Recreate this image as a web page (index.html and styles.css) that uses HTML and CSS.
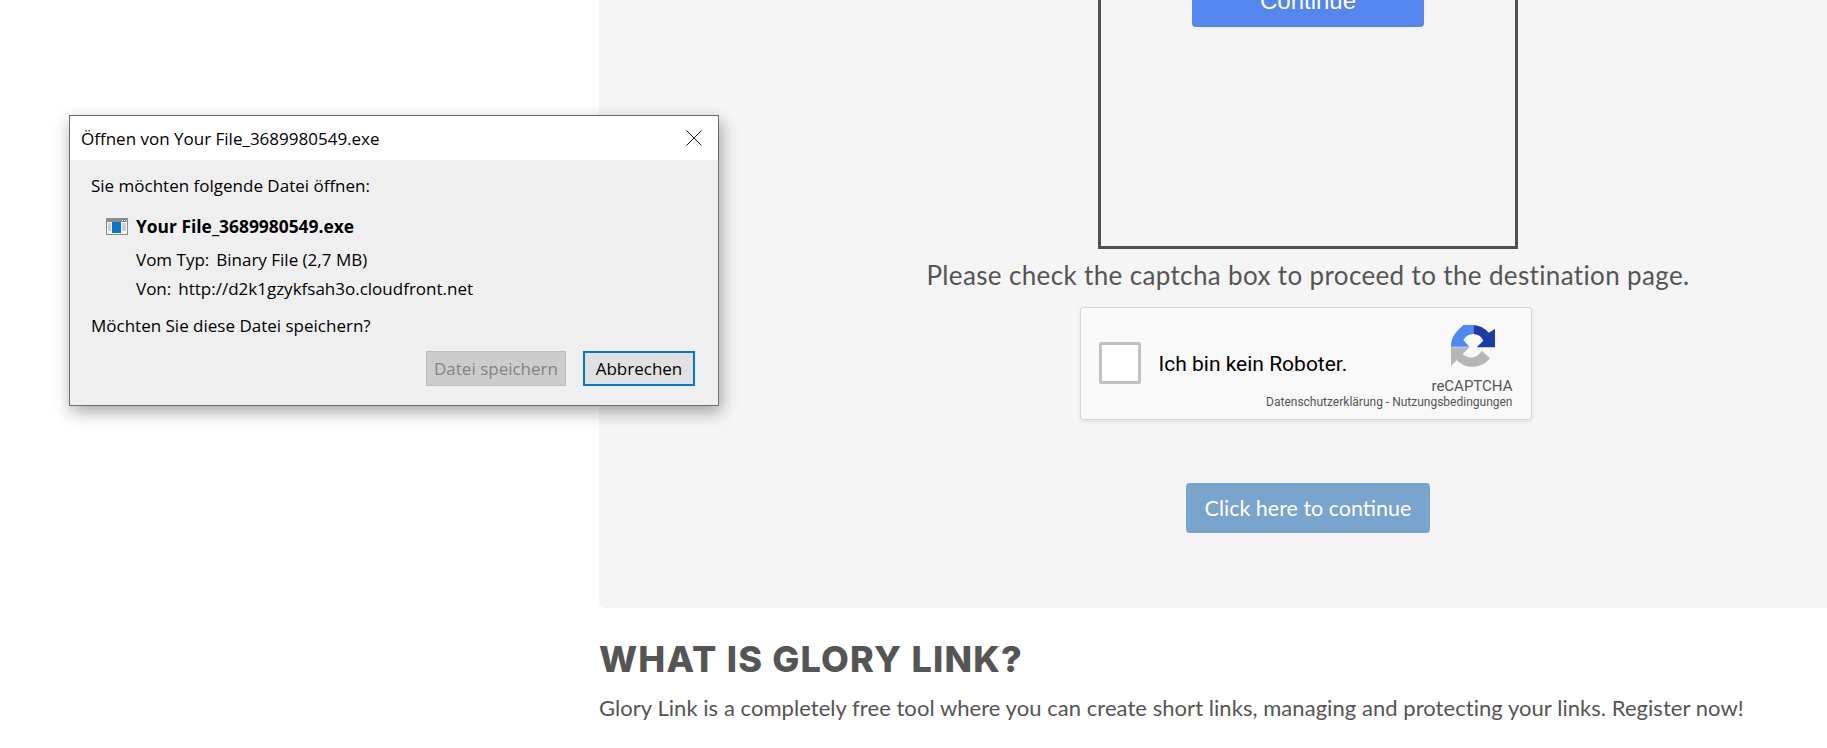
FILE: index.html
```html
<!DOCTYPE html>
<html lang="de">
<head>
<meta charset="utf-8">
<title>Glory Link</title>
<link rel="stylesheet" href="styles.css">
</head>
<body>
<main class="page">
  <section class="panel">
    <div class="frame">
      <a class="continue">Continue</a>
    </div>
    <p class="hint">Please check the captcha box to proceed to the destination page.</p>
    <div class="captcha">
      <span class="check"></span>
      <span class="robot">Ich bin kein Roboter.</span>
      <div class="brand">
        <svg class="logo" viewBox="93 45 132 135" width="44" height="45" aria-hidden="true">
          <path fill="#1c3aa9" d="M160 45A67 67 0 0 1 206 68L225 57V112H170L190 92A35 35 0 0 0 160 72Z"/>
          <path fill="#4a8af4" d="M93 110V105A67 67 0 0 1 114 61L130 45H160V72A35 35 0 0 0 130 90L148 110Z"/>
          <path fill="#b6b6b6" d="M93 112H148L128 132A35 35 0 0 0 185 122L210 145A67 67 0 0 1 110 151L93 168Z"/>
        </svg>
        <span class="brand-name">reCAPTCHA</span>
        <span class="brand-links">Datenschutzerklärung - Nutzungsbedingungen</span>
      </div>
    </div>
    <a class="proceed">Click here to continue</a>
  </section>
  <section class="about">
    <h2>WHAT IS GLORY LINK?</h2>
    <p>Glory Link is a completely free tool where you can create short links, managing and protecting your links. Register now!</p>
  </section>
</main>

<div class="dialog" role="dialog">
  <header class="dlg-title">
    <span>Öffnen von Your File_3689980549.exe</span>
    <svg class="dlg-close" viewBox="0 0 16 16" width="16" height="16" aria-hidden="true"><path d="M0.5 0.5L15.5 15.5M15.5 0.5L0.5 15.5" stroke="#1a1a1a" stroke-width="1" fill="none"/></svg>
  </header>
  <div class="dlg-body">
    <p class="dlg-lead">Sie möchten folgende Datei öffnen:</p>
    <div class="dlg-file">
      <svg class="dlg-icon" viewBox="0 0 22 17" width="22" height="17" aria-hidden="true">
        <rect x="0.5" y="0.5" width="21" height="16" fill="#f7f7f7" stroke="#8c8c8c"/>
        <rect x="1" y="1" width="20" height="3" fill="#8c8c8c"/>
        <path d="M16 2.5h1M18 2.5h1M20 2.5h1" stroke="#e4e4e4" stroke-width="1"/>
        <rect x="6" y="4" width="9" height="11" fill="#0078d7"/>
        <path d="M2 6h3M2 8h3M2 10h3M2 12h3M16 6h4M16 8h4M16 10h4M16 12h4" stroke="#a8a8a8" stroke-width="1"/>
      </svg>
      <strong>Your File_3689980549.exe</strong>
    </div>
    <div class="dlg-meta"><span>Vom Typ:</span><span>Binary File (2,7 MB)</span></div>
    <div class="dlg-meta dlg-meta-url"><span>Von:</span><span>http://d2k1gzykfsah3o.cloudfront.net</span></div>
    <p class="dlg-ask">Möchten Sie diese Datei speichern?</p>
    <div class="dlg-actions">
      <button class="btn-save" type="button">Datei speichern</button>
      <button class="btn-cancel" type="button">Abbrechen</button>
    </div>
  </div>
</div>
</body>
</html>
```
FILE: styles.css
```css
html, body {
  margin: 0;
  padding: 0;
  height: 748px;
  overflow: hidden;
  background: #fff;
}
.page {
  width: 1418px;
  margin-left: 599px;
  font-family: "Lato", sans-serif;
  color: #555;
}
.panel {
  height: 608px;
  background: #f5f5f5;
  border-radius: 0 0 0 6px;
  display: flex;
  flex-direction: column;
  align-items: center;
}
.frame {
  box-sizing: border-box;
  width: 420px;
  height: 249px;
  border: 3px solid #505050;
  border-top: 0;
  display: flex;
  justify-content: center;
  align-items: flex-start;
}
.continue {
  width: 232px;
  height: 52px;
  margin-top: -25px;
  background: #5387ef;
  border-radius: 4px;
  color: #fff;
  font: 24px/52px "Liberation Sans", sans-serif;
  text-align: center;
}
.hint {
  margin: 10px 0 0;
  height: 48px;
  font-size: 26px;
  line-height: 32px;
  letter-spacing: .36px;
}
.captcha {
  box-sizing: border-box;
  width: 452px;
  height: 113px;
  margin-left: -5px;
  display: flex;
  align-items: center;
  padding: 0 18px 0 18px;
  background: #f9f9f9;
  border: 1px solid #d6d6d6;
  border-radius: 3px;
  box-shadow: 0 2px 5px rgba(0,0,0,.08);
  font-family: "Roboto", sans-serif;
  white-space: nowrap;
}
.check {
  box-sizing: border-box;
  flex: none;
  width: 42px;
  height: 42px;
  margin-top: -1px;
  background: #fff;
  border: 3px solid #c1c1c1;
  border-radius: 2px;
}
.robot {
  margin-left: 18px;
  font-size: 21px;
  color: #000;
}
.brand {
  margin-left: auto;
  width: 82px;
  align-self: flex-start;
  display: flex;
  flex-direction: column;
  align-items: flex-end;
  padding-top: 17px;
  color: #555;
}
.logo {
  margin-right: 18px;
}
.brand-name {
  font-size: 15px;
  line-height: 18px;
  margin-top: 7px;
}
.brand-links {
  font-size: 12px;
  line-height: 16px;
  margin-top: -1px;
}
.proceed {
  margin-top: 63px;
  width: 244px;
  height: 50px;
  background: #78a4ce;
  border-radius: 4px;
  color: #fff;
  font-size: 21.5px;
  line-height: 50px;
  text-align: center;
}
.about h2 {
  margin: 29px 0 0;
  font-family: "Inter", sans-serif;
  font-weight: 800;
  font-size: 36px;
  line-height: 44px;
  letter-spacing: 1.2px;
}
.about p {
  margin: 12px 0 0;
  font-size: 22px;
  line-height: 30px;
  letter-spacing: .05px;
}
.dialog {
  position: absolute;
  left: 69px;
  top: 115px;
  box-sizing: border-box;
  width: 650px;
  height: 291px;
  background: #efefef;
  border: 1px solid #6b6b6b;
  box-shadow: 2px 6px 16px rgba(0,0,0,.35);
  font-family: "Open Sans", sans-serif;
  font-size: 17px;
  color: #000;
  display: flex;
  flex-direction: column;
}
.dlg-title {
  height: 44px;
  background: #fff;
  display: flex;
  align-items: center;
  justify-content: space-between;
  padding: 0 16px 0 11px;
}
.dlg-body {
  flex: 1;
  padding: 0 21px 0 21px;
  display: flex;
  flex-direction: column;
}
.dlg-body p {
  margin: 0;
  line-height: 20px;
}
.dlg-lead {
  padding-top: 16px;
}
.dlg-file {
  display: flex;
  align-items: center;
  gap: 8px;
  margin-left: 15px;
  margin-top: 20px;
  height: 20px;
}
.dlg-file strong {
  font-size: 17.4px;
}
.dlg-meta {
  display: flex;
  gap: 7px;
  margin-left: 45px;
  line-height: 20px;
  margin-top: 14px;
}
.dlg-meta-url {
  margin-top: 9px;
}
.dlg-ask {
  margin-top: 17px !important;
}
.dlg-actions {
  display: flex;
  justify-content: flex-end;
  gap: 17px;
  margin-top: 15px;
  padding-right: 2px;
}
.dlg-actions button {
  box-sizing: border-box;
  height: 35px;
  padding: 0;
  font: 17px "Open Sans", sans-serif;
}
.btn-save {
  width: 140px;
  background: #cccccc;
  border: 1px solid #bfbfbf;
  color: #838383;
}
.btn-cancel {
  width: 112px;
  background: #e1e1e1;
  border: 2px solid #0078d7;
  color: #000;
}
```
